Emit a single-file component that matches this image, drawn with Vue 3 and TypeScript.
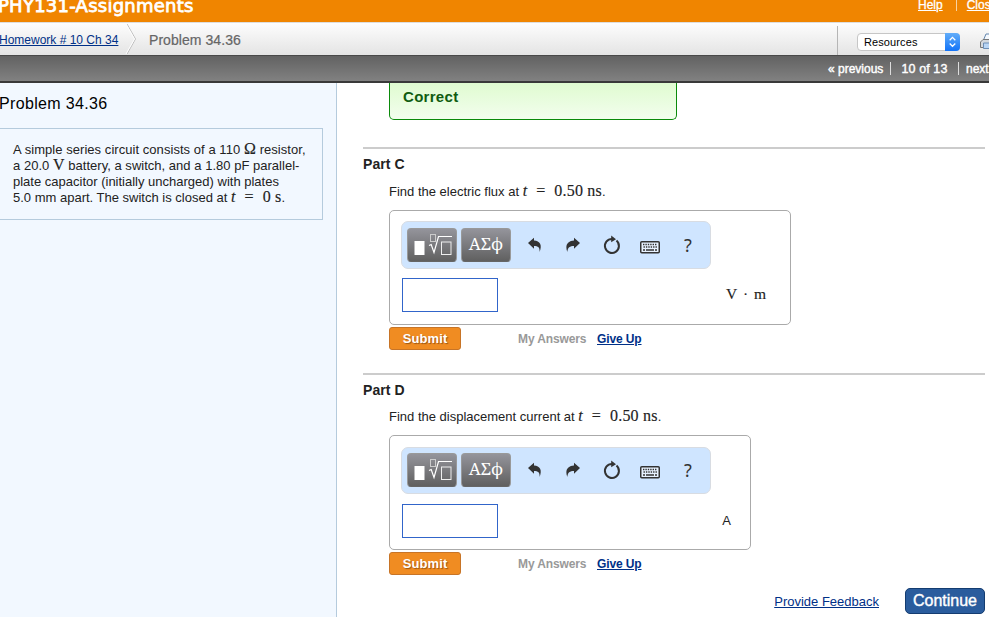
<script setup lang="ts">
interface Part {
  id: string
  title: string
  prompt: string
  unit: string
  mathUnit: boolean
}

const parts: Part[] = [
  { id: 'c', title: 'Part C', prompt: 'Find the electric flux at', unit: 'V · m', mathUnit: true },
  { id: 'd', title: 'Part D', prompt: 'Find the displacement current at', unit: 'A', mathUnit: false },
]
</script>

<template>
  <div class="page">
    <header class="brand">
      <h1>PHY131-Assignments</h1>
      <nav class="account"><a href="#">Help</a><i></i><a href="#">Close</a></nav>
    </header>

    <div class="crumbs">
      <a class="parent" href="#">Homework # 10 Ch 34</a>
      <svg class="chevron" width="12" height="32" viewBox="0 0 12 32">
        <path d="M2 1 L10.500 16 L2 31" fill="none" stroke="#bcbcbc" />
        <path d="M1 1 L9.500 16 L1 31" fill="none" stroke="#fff" />
      </svg>
      <span class="current">Problem 34.36</span>
      <div class="resources">
        <div class="select">
          <span>Resources</span>
          <b>
            <svg width="15" height="18" viewBox="0 0 15 18" fill="none" stroke="#fff" stroke-width="1.300">
              <path d="M4.700 7.200 L7.500 4.400 L10.300 7.200 M4.700 10.500 L7.500 13.300 L10.300 10.500" />
            </svg>
          </b>
        </div>
        <svg class="printer" width="22" height="20" viewBox="0 0 22 20">
          <path d="M4.500 8 L7 2 H19 V8Z" fill="#f4f8fd" stroke="#6385ad" />
          <path d="M1.500 15.500 V10 L4 7.500 H20 V15.500Z" fill="#d5d9de" stroke="#777" />
          <path d="M4.500 11 H20 V16.500 H4.500Z" fill="#b9d5f4" stroke="#6d8eb5" />
        </svg>
      </div>
    </div>

    <div class="pager">
      <a class="prev">« previous</a><i></i><span class="count">10 of 13</span><i></i><a class="next">next »</a>
    </div>

    <div class="body">
      <aside>
        <h2>Problem 34.36</h2>
        <div class="statement">
          <p class="l1">A simple series circuit consists of a 110 <em class="m sym">Ω</em> resistor,</p>
          <p class="l2">a 20.0 <em class="m sym">V</em> battery, a switch, and a 1.80 pF parallel-</p>
          <p>plate capacitor (initially uncharged) with plates</p>
          <p>5.0 mm apart. The switch is closed at <em class="m var">t</em><em class="m eq">=</em><em class="m">0 s</em>.</p>
        </div>
      </aside>

      <main>
        <div class="correct">Correct</div>

        <section v-for="part in parts" :key="part.id" :class="['part', 'part-' + part.id]">
          <h3>{{ part.title }}</h3>
          <p class="prompt">{{ part.prompt }} <em class="m var">t</em><em class="m eq">=</em><em class="m">0.50 ns</em>.</p>
          <div class="answer">
            <div class="toolbar">
              <button class="tile">
                <svg width="50" height="34" viewBox="0 0 50 34">
                  <rect x="7.500" y="13" width="10" height="14" fill="#fff" />
                  <g fill="none" stroke="#eee">
                    <rect x="23.500" y="6.500" width="5" height="7" stroke="#ccc" />
                    <path d="M22 17.500 L24.200 16.500 L27 24.500 L31.500 8.500 H45" stroke="#fff" stroke-width="1.200" />
                    <rect x="34.500" y="14" width="9.500" height="12.500" />
                  </g>
                </svg>
              </button>
              <button class="tile greek">ΑΣϕ</button>
              <svg class="tool undo" width="16" height="16" viewBox="0 0 16 16">
                <path d="M1 6 L7 .8 V3.500 C13 3.800 15.500 8 12.600 15 C13 10.500 11 9 7 9 V11.800Z" fill="#333" />
              </svg>
              <svg class="tool redo" width="16" height="16" viewBox="0 0 16 16">
                <path d="M15 6 L9 .8 V3.500 C3 3.800 -.5 8 2.400 15 C2.500 10.500 5 9 9 9 V11.800Z" fill="#333" />
              </svg>
              <svg class="tool reset" width="18" height="20" viewBox="0 0 18 20">
                <path d="M13.500 5.600 A7 7 0 1 1 9 3.900" fill="none" stroke="#333" stroke-width="2" />
                <path d="M8.200 .5 L13 4.200 L8.200 7.200Z" fill="#333" />
              </svg>
              <svg class="tool keys" width="20" height="13" viewBox="0 0 20 13">
                <rect x=".75" y=".75" width="18.500" height="11" rx="1" fill="#e8f2ff" stroke="#333" stroke-width="1.500" />
                <path d="M3 3.500 H17 M3.500 6 H17" stroke="#333" stroke-width="1.400" stroke-dasharray="1.400 1" />
                <path d="M3 9 H5 M6 9 H14 M15 9 H17" stroke="#333" stroke-width="1.400" />
              </svg>
              <span class="help">?</span>
            </div>
            <div class="entry">
              <input type="text" />
              <span :class="['unit', { math: part.mathUnit }]">{{ part.unit }}</span>
            </div>
          </div>
          <div class="actions">
            <button class="submit">Submit</button>
            <span class="mine">My Answers</span>
            <a href="#">Give Up</a>
          </div>
        </section>

        <footer>
          <a href="#">Provide Feedback</a>
          <button class="continue">Continue</button>
        </footer>
      </main>
    </div>
  </div>
</template>

<style>
body { margin: 0; overflow: hidden; }
</style>

<style scoped>
* { box-sizing: border-box; }
.page { width: 989px; height: 617px; overflow: hidden; background: #fff; color: #222; font: 13px/16px "Liberation Sans", Arial, sans-serif; display: flex; flex-direction: column; }
h1, h2, h3, p { margin: 0; font-weight: normal; }
a { color: #003087; white-space: nowrap; }
button { font-family: inherit; padding: 0; margin: 0; }
i { font-style: normal; }

.brand { height: 22px; flex: none; background: #f08500; color: #fff; display: flex; justify-content: space-between; align-items: flex-start; }
.brand h1 { font: 18px/22px "DejaVu Sans", Verdana, sans-serif; margin-top: -5px; margin-left: -2px; letter-spacing: .25px; white-space: nowrap; -webkit-text-stroke: .8px #fff; }
.account { display: flex; width: 71px; height: 12px; margin-top: -1px; line-height: 12px; font-size: 12px; -webkit-text-stroke: .3px #fff; }
.account a { color: #fff; }
.account i { width: 1px; height: 12px; background: #f8d2a0; margin: 0 10px 0 13px; flex: none; }

.crumbs { height: 33px; flex: none; border-top: 1px solid #ddd; background: linear-gradient(#fdfdfd, #e4e4e4); display: flex; align-items: center; }
.parent { width: 126px; font-size: 12px; padding-top: 2px; margin-left: -1px; }
.chevron { flex: none; }
.current { margin-left: 12px; font-size: 14px; letter-spacing: .06px; color: #666; padding-top: 2px; white-space: nowrap; -webkit-text-stroke: .2px #666; }
.resources { margin-left: auto; width: 152px; height: 30px; margin-top: 3px; border-left: 1px solid #b5b5b5; display: flex; align-items: center; padding-left: 19px; flex: none; }
.select { width: 103px; height: 18px; margin-top: 3px; border: 1px solid #c6c6c6; border-radius: 4px; background: #fff; display: flex; justify-content: space-between; align-items: center; font-size: 11px; color: #000; padding-left: 6px; flex: none; }
.select span { letter-spacing: .1px; }
.select b { width: 15px; height: 18px; border-radius: 0 4px 4px 0; background: linear-gradient(#62adf9, #1273f8); margin-right: -1px; }
.select svg { display: block; }
.printer { margin-left: 19px; margin-top: 2px; flex: none; }

.pager { height: 28px; flex: none; border-top: 1px solid #494949; border-bottom: 2px solid #393939; background: linear-gradient(#626262, #818181); color: #fff; display: flex; align-items: center; padding-left: 828px; font-size: 12px; -webkit-text-stroke: .4px #fff; white-space: nowrap; }
.pager a { color: #fff; }
.pager .prev { width: 62px; flex: none; }
.pager i { width: 1px; height: 13px; background: #ddd; flex: none; }
.count { width: 67px; flex: none; text-align: center; font-size: 12.500px; letter-spacing: .1px; }
.next { margin-left: 7px; flex: none; }

.body { height: 534px; flex: none; display: flex; }
aside { width: 337px; flex: none; background: #f2f8ff; border-right: 1px solid #b5cbdd; }
h2 { font-size: 16px; line-height: 20px; margin-top: 11px; margin-left: -1px; letter-spacing: .35px; color: #000; }
.statement { margin-top: 14px; width: 323px; height: 92px; border: 1px solid #b5cbdd; border-left: 0; padding: 13px 0 0 13px; }
.statement p { height: 16px; white-space: nowrap; line-height: 16px; }
.l1 { letter-spacing: .05px; }
.l2 { letter-spacing: .02px; }
.m { font: 16px/1px "Liberation Serif", serif; letter-spacing: .2px; -webkit-text-stroke: .15px #222; }
.m.var { font-style: italic; }
.m.eq { display: inline-block; width: 27px; text-align: center; }

main { flex: 1; padding-left: 26px; display: flex; flex-direction: column; }
.correct { flex: none; margin-left: 26px; width: 288px; height: 37px; border: 1px solid #0b8a0b; border-top: 0; border-radius: 0 0 5px 5px; background: linear-gradient(#dffbd0, #f3feee); color: #105c10; font-size: 15px; letter-spacing: .3px; font-weight: bold; padding: 6px 13px; }
.part { width: 622px; height: 226px; flex: none; border-top: 2px solid #ccc; }
.part-c { margin-top: 27px; }
h3 { height: 16px; margin-top: 7px; font-size: 14px; line-height: 16px; font-weight: bold; letter-spacing: .1px; }
.prompt { height: 18px; line-height: 18px; margin: 11px 0 0 26px; white-space: nowrap; }
.answer { margin: 9px 0 0 26px; width: 402px; height: 115px; border: 1px solid #aaa; border-radius: 5px; padding: 10px 11px; }
.toolbar { width: 310px; height: 48px; border: 1px solid #d8dce2; border-radius: 7px; background: #cfe5ff; display: flex; align-items: center; padding-left: 5px; }
.tile { width: 50px; height: 34px; border: 1px solid #999; border-bottom-color: #666; border-radius: 4px; background: linear-gradient(#94949b, #606060); color: #fff; flex: none; overflow: hidden; }
.tile svg { display: block; margin: -1px; }
.greek { margin-left: 4px; font: 17px/28px "Noto Serif", "Liberation Serif", serif; padding-bottom: 3px; }
.tool { flex: none; }
.undo { margin-left: 16px; }
.redo { margin-left: 22px; }
.reset { margin-left: 22px; }
.keys { margin-left: 19px; margin-top: 4px; }
.help { margin-left: 24px; font: 18px/20px "Noto Sans", sans-serif; color: #333; }
.entry { display: flex; align-items: center; margin-top: 9px; padding-left: 1px; height: 34px; }
.entry input { width: 96px; height: 34px; border: 1px solid #3165ca; background: #fff; padding: 0; outline: none; }
.unit { margin-left: auto; margin-right: 8px; color: #222; white-space: pre; }
.unit.math { margin-right: 12px; margin-top: -2px; font: 15.500px/16px "Liberation Serif", serif; letter-spacing: 1px; -webkit-text-stroke: .15px #222; }
.actions { display: flex; align-items: center; height: 23px; margin: 2px 0 0 26px; font-size: 12px; letter-spacing: -.12px; font-weight: bold; white-space: nowrap; }
.submit { width: 72px; height: 23px; border: 1px solid #c77427; border-radius: 3px; background: #f08c22; color: #fff; font-size: 13px; letter-spacing: .1px; font-weight: bold; text-shadow: 1px 1px 1px #9a5514; }
.mine { color: #999; margin-left: 57px; width: 79px; }

.part-d { height: 211px; }
.part-d .prompt { margin-top: 10px; }
.part-d .answer { width: 362px; padding-top: 11px; }
.part-d .toolbar { height: 47px; padding-bottom: 1px; }
.part-d .entry { margin-top: 10px; }

footer { display: flex; align-items: center; justify-content: flex-end; height: 26px; flex: none; margin-top: 4px; padding-right: 4px; }
footer a { padding-top: 1px; }
.continue { width: 80px; height: 26px; margin-left: 26px; border: 1px solid #143c70; border-radius: 5px; background: #2a5c9d; color: #fff; font-size: 16px; -webkit-text-stroke: .4px #fff; }
</style>
